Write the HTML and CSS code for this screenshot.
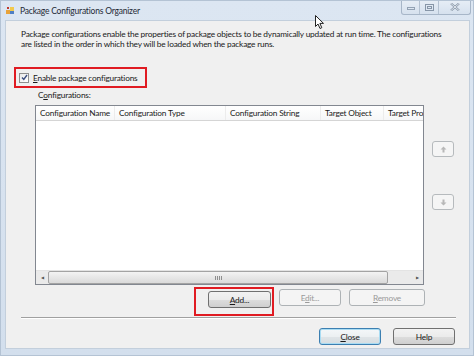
FILE: index.html
```html
<!DOCTYPE html>
<html lang="en">
<head>
    <meta charset="UTF-8">
    <title>Package Configurations Organizer</title>
    <link rel="stylesheet" href="styles.css">
</head>
<body>
    <div class="window">
        <div class="titlebar">
            <svg class="app-icon" width="9" height="9" viewBox="0 0 9 9">
                <rect x="0" y="4" width="4" height="4" fill="#e8a33a"/>
                <rect x="4" y="1" width="4" height="4" fill="#f2c94c"/>
                <rect x="4" y="5" width="4" height="3" fill="#4f7fc4"/>
                <rect x="1" y="1" width="2" height="2" fill="#c0392b"/>
            </svg>
            <span class="title">Package Configurations Organizer</span>
            <div class="caption-buttons">
                <span class="cap cap-min">
                    <svg width="8" height="6" viewBox="0 0 8 6"><rect x="0.5" y="3.5" width="7" height="2" fill="none" stroke="#93a2b4"/></svg>
                </span>
                <span class="cap cap-max">
                    <svg width="9" height="7" viewBox="0 0 9 7"><rect x="0.5" y="0.5" width="8" height="6" fill="none" stroke="#8796a8"/><rect x="2.5" y="2.5" width="4" height="2" fill="none" stroke="#8796a8"/></svg>
                </span>
                <span class="cap cap-close">
                    <svg width="10" height="8" viewBox="0 0 10 8"><path d="M1 0.5 L9 7.5 M9 0.5 L1 7.5" stroke="#8796a8" stroke-width="2.2" fill="none"/><path d="M1 0.5 L9 7.5 M9 0.5 L1 7.5" stroke="#f4f7fa" stroke-width="0.8" fill="none"/></svg>
                </span>
            </div>
        </div>

        <div class="client">
            <p class="desc">Package configurations enable the properties of package objects to be dynamically updated at run time. The configurations<br>are listed in the order in which they will be loaded when the package runs.</p>

            <div class="enable-box">
                <span class="checkbox">
                    <svg width="7" height="7" viewBox="0 0 7 7"><path d="M1 3.5 L2.8 5.5 L6 1" stroke="#3c4f80" stroke-width="1.4" fill="none"/></svg>
                </span>
                <span class="check-text"><u>E</u>nable package configurations</span>
            </div>

            <div class="section-label">C<u>o</u>nfigurations:</div>

            <div class="main">
                <div class="listview">
                    <div class="lv-header">
                        <span class="col col-name">Configuration Name</span>
                        <span class="col col-type">Configuration Type</span>
                        <span class="col col-string">Configuration String</span>
                        <span class="col col-target">Target Object</span>
                        <span class="col col-prop">Target Pro</span>
                    </div>
                    <div class="lv-body"></div>
                    <div class="hscroll">
                        <span class="sb-arrow">&#9664;</span>
                        <span class="sb-thumb"><span class="grip"></span></span>
                        <span class="sb-track"></span>
                        <span class="sb-arrow">&#9654;</span>
                    </div>
                </div>
                <div class="side">
                    <button class="btn btn-move btn-up"><svg width="7" height="7" viewBox="0 0 7 7"><path d="M3.5 0.5 L6.5 3.5 L4.5 3.5 L4.5 6.5 L2.5 6.5 L2.5 3.5 L0.5 3.5 Z" fill="#b8b8b8"/></svg></button>
                    <button class="btn btn-move btn-down"><svg width="7" height="7" viewBox="0 0 7 7"><path d="M3.5 6.5 L6.5 3.5 L4.5 3.5 L4.5 0.5 L2.5 0.5 L2.5 3.5 L0.5 3.5 Z" fill="#b8b8b8"/></svg></button>
                </div>
            </div>

            <div class="actions">
                <div class="add-box">
                    <button class="btn btn-add"><u>A</u>dd...</button>
                </div>
                <button class="btn btn-edit" disabled>E<u>d</u>it...</button>
                <button class="btn btn-remove" disabled><u>R</u>emove</button>
            </div>

            <div class="separator"></div>

            <div class="footer">
                <button class="btn btn-close"><u>C</u>lose</button>
                <button class="btn btn-help">Help</button>
            </div>
        </div>

        <svg class="cursor" width="10" height="15" viewBox="0 0 10 15">
            <path d="M0.5 0.5 L0.5 11.5 L3 9 L5 13.5 L6.8 12.7 L4.9 8.4 L8.5 8.4 Z" fill="#fff" stroke="#222" stroke-width="1"/>
        </svg>
    </div>
</body>
</html>
```

FILE: styles.css
```css
body {
    margin: 0;
    padding: 0;
    background-color: #fff;
    font-family: Lato, "Noto Sans", sans-serif;
    font-size: 8.3px;
    letter-spacing: -0.2px;
    color: #1a1a1a;
}

.window {
    position: relative;
    width: 474px;
    height: 356px;
    background: linear-gradient(to bottom, #dce6f2, #d3dfed);
    box-sizing: border-box;
    border: 1px solid #b4c3d4;
    display: flex;
    flex-direction: column;
    overflow: hidden;
}

/* title bar */
.titlebar {
    height: 19px;
    display: flex;
    align-items: center;
    padding-left: 5px;
    position: relative;
}

.app-icon {
    margin-right: 5px;
}

.title {
    font-size: 8.5px;
    color: #1f2a36;
}

.caption-buttons {
    position: absolute;
    top: -1px;
    right: 2px;
    display: flex;
    height: 14px;
    border: 1px solid #a7b6c8;
    border-top: none;
    border-radius: 0 0 3px 3px;
    background: linear-gradient(to bottom, #e7eef6, #d6e1ee);
}

.cap {
    display: flex;
    align-items: center;
    justify-content: center;
    height: 14px;
}

.cap-min { width: 17px; border-right: 1px solid #b4c2d2; }
.cap-max { width: 18px; border-right: 1px solid #b4c2d2; }
.cap-close { width: 31px; }

/* client area */
.client {
    flex: 1;
    margin: 0 3px 6px 4px;
    background-color: #f0f0f0;
    border: 1px solid #c3cfdc;
    display: flex;
    flex-direction: column;
}

.desc {
    margin: 8px 0 0 15px;
    line-height: 10px;
    white-space: nowrap;
}

.enable-box {
    margin: 18px 0 0 8px;
    width: 126px;
    height: 17px;
    border: 2px solid #e01b22;
    display: flex;
    align-items: center;
    padding-left: 3px;
    white-space: nowrap;
}

.checkbox {
    width: 8px;
    height: 8px;
    border: 1px solid #8e8f8f;
    background: linear-gradient(to bottom right, #e9e9e9, #fff);
    display: flex;
    align-items: center;
    justify-content: center;
    margin-right: 4px;
}

.section-label {
    margin: 2px 0 0 32px;
    line-height: 10px;
}

.main {
    display: flex;
    margin: 5px 0 0 29px;
}

.listview {
    width: 387px;
    height: 178px;
    border: 1px solid #828790;
    background-color: #fff;
    display: flex;
    flex-direction: column;
}

.lv-header {
    display: flex;
    height: 14px;
    border-bottom: 1px solid #d5d5d5;
    background: linear-gradient(to bottom, #fff, #f6f7f8);
    overflow: hidden;
    white-space: nowrap;
}

.col {
    box-sizing: border-box;
    padding-left: 4px;
    line-height: 14px;
    border-right: 1px solid #ececec;
    flex-shrink: 0;
    overflow: hidden;
}

.col-name { width: 79px; }
.col-type { width: 111px; }
.col-string { width: 95px; }
.col-target { width: 63px; }
.col-prop { width: 60px; border-right: none; }

.lv-body {
    flex: 1;
}

.hscroll {
    height: 13px;
    display: flex;
    align-items: stretch;
    background: #eaeaea;
    border-top: 1px solid #e3e3e3;
}

.sb-arrow {
    width: 12px;
    font-size: 4px;
    color: #555;
    display: flex;
    align-items: center;
    justify-content: center;
}

.sb-thumb {
    width: 340px;
    box-sizing: border-box;
    border: 1px solid #a3a3a3;
    border-radius: 2px;
    background: linear-gradient(to bottom, #f3f3f3, #dadada);
    display: flex;
    align-items: center;
    justify-content: center;
}

.grip {
    width: 7px;
    height: 4px;
    background: repeating-linear-gradient(to right, #8e8e8e 0 1px, transparent 1px 2px);
}

.sb-track {
    flex: 1;
}

.side {
    margin-left: 8px;
    padding-top: 36px;
    display: flex;
    flex-direction: column;
    gap: 37px;
}

/* buttons */
.btn {
    font-family: inherit;
    font-size: 8.3px;
    letter-spacing: -0.2px;
    color: #1a1a1a;
    box-sizing: border-box;
    height: 17px;
    padding: 0;
    border: 1px solid #707070;
    border-radius: 3px;
    background: linear-gradient(to bottom, #f2f2f2 0%, #ebebeb 50%, #dddddd 51%, #cfcfcf 100%);
}

.btn:disabled {
    border-color: #adb2b5;
    background: #f4f4f4;
    color: #9a9a9a;
}

.btn-move {
    width: 22px;
    height: 16px;
    border-color: #b6babd;
    background: #f5f5f5;
    display: flex;
    align-items: center;
    justify-content: center;
}

.actions {
    display: flex;
    align-items: flex-start;
    margin: 2px 0 0 188px;
}

.add-box {
    border: 2px solid #e01b22;
    padding: 2px 1px 4px 12px;
    height: 19px;
}

.btn-add { width: 63px; }

.btn-edit {
    width: 62px;
    margin: 2px 0 0 5px;
}

.btn-remove {
    width: 76px;
    margin: 2px 0 0 8px;
}

.separator {
    margin: 1px 0 0 15px;
    width: 435px;
    border-top: 1px solid #a0a0a0;
    border-bottom: 1px solid #fff;
    box-sizing: border-box;
    height: 2px;
}

.footer {
    display: flex;
    margin: 9px 0 0 313px;
    gap: 12px;
}

.btn-close {
    width: 62px;
    border-color: #3c7fb1;
    box-shadow: inset 0 0 0 1px #a9dcf3;
    background: linear-gradient(to bottom, #f4f7f9 0%, #ecf0f2 50%, #e0e5e8 51%, #d6dde1 100%);
}

.btn-help { width: 62px; }

.cursor {
    position: absolute;
    left: 314px;
    top: 14px;
}
```
